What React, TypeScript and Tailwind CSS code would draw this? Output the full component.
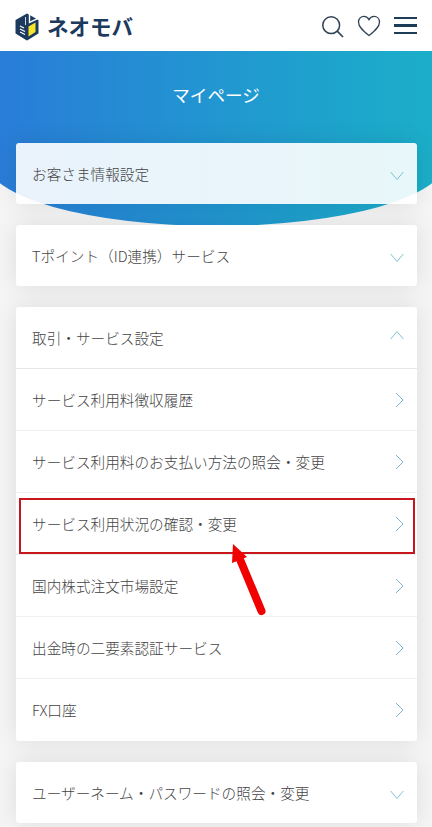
const ChevronDown = () => (
  <svg width="14" height="10" viewBox="0 0 14 10" fill="none" className="mt-[5px] mr-[13px]">
    <path d="M0.7 1 L7 8.5 L13.3 1" stroke="#7fc3d4" strokeWidth="1" />
  </svg>
);

const ChevronUp = () => (
  <svg width="14" height="10" viewBox="0 0 14 10" fill="none" className="-mt-[5px] mr-[13px]">
    <path d="M0.7 9 L7 1.5 L13.3 9" stroke="#7fc3d4" strokeWidth="1" />
  </svg>
);

const ChevronRight = () => (
  <svg width="9" height="16" viewBox="0 0 9 16" fill="none" className="mr-[13px]">
    <path d="M1 1 L8 8 L1 15" stroke="#7fb4d4" strokeWidth="1" />
  </svg>
);

const Logo = () => (
  <svg width="24" height="28" viewBox="0 0 24 28" fill="none" className="mt-[3px]">
    <path d="M12 1.5 L22.5 7.5 V20 L12 26.5 L1.5 20 V7.5 Z" fill="#1c3a5e" stroke="#1c3a5e" strokeWidth="2" strokeLinejoin="round" />
    <path d="M14.5 0 V9.5 L24 5" stroke="#ffffff" strokeWidth="1.4" fill="none" />
    <path d="M13.5 13.5 L20.5 9.5 V19 L13.5 23.5 Z" fill="#f6e32a" />
    <path d="M5 13 L9 15 M5 16 L10 18.5 M5 19 L10 21.5" stroke="#ffffff" strokeWidth="1.2" />
    <path d="M10.5 4 V12" stroke="#ffffff" strokeWidth="0.8" />
  </svg>
);

const Collapsed = ({ label, translucent }: { label: string; translucent?: boolean }) => (
  <div
    className={`relative flex h-[61px] items-center justify-between rounded-[3px] pl-4 shadow-[0_0_24px_rgba(0,0,0,0.1)] ${
      translucent ? "bg-white/90" : "bg-white"
    }`}
  >
    <span>{label}</span>
    <ChevronDown />
  </div>
);

const rows = [
  "サービス利用料徴収履歴",
  "サービス利用料のお支払い方法の照会・変更",
  "サービス利用状況の確認・変更",
  "国内株式注文市場設定",
  "出金時の二要素認証サービス",
  "FX口座",
];

export default function App() {
  return (
    <div
      className="relative h-[827px] w-[432px] overflow-hidden bg-[#f5f5f5] text-[14.65px] font-light text-[#444444]"
      style={{ fontFamily: '"Noto Sans CJK JP", "Noto Sans", sans-serif' }}
    >
      <header className="flex h-[51px] items-center justify-between bg-white pl-[15px] pr-[15px]">
        <div className="flex items-center gap-[8px]">
          <Logo />
          <span className="text-[21.5px] leading-none font-bold text-[#1c3a5e]">ネオモバ</span>
        </div>
        <div className="flex items-center">
          <svg width="22" height="22" viewBox="0 0 22 22" fill="none" className="mt-[2px] mr-[13px]">
            <circle cx="9.2" cy="9.2" r="8.4" stroke="#2f4258" strokeWidth="1.5" />
            <path d="M15.2 15.2 L21 21" stroke="#2f4258" strokeWidth="1.7" />
          </svg>
          <svg width="24" height="22" viewBox="0 0 24 22" fill="none" className="mr-[13px]">
            <path
              d="M12 20.5 C7 16.5 1.5 12.5 1.5 7 C1.5 3.5 4 1.3 7 1.3 C9.2 1.3 11 2.6 12 4.6 C13 2.6 14.8 1.3 17 1.3 C20 1.3 22.5 3.5 22.5 7 C22.5 12.5 17 16.5 12 20.5 Z"
              stroke="#2f4258"
              strokeWidth="1.3"
            />
          </svg>
          <div className="flex w-[23px] flex-col gap-[5px]">
            <div className="h-[2.5px] bg-[#1d3c58]" />
            <div className="h-[2.5px] bg-[#1d3c58]" />
            <div className="h-[2.5px] bg-[#1d3c58]" />
          </div>
        </div>
      </header>

      <div className="-mb-[83px] h-[175px] overflow-hidden">
        <div className="-ml-[14px] flex h-full w-[460px] justify-center rounded-b-[230px_65px] bg-gradient-to-r from-[#2a7bd8] to-[#1bb0c8] pt-[32px]">
          <h1 className="text-[17.6px] leading-[24px] font-normal text-white">マイページ</h1>
        </div>
      </div>

      <div className="relative flex flex-col gap-[21px] pr-[15px] pl-4">
        <Collapsed label="お客さま情報設定" translucent />
        <Collapsed label="Tポイント（ID連携）サービス" />
        <div className="rounded-[3px] bg-white shadow-[0_0_24px_rgba(0,0,0,0.1)]">
          <div className="flex h-[62px] items-center justify-between border-b border-[#e6e6e6] pl-4">
            <span>取引・サービス設定</span>
            <ChevronUp />
          </div>
          {rows.map((row, i) => (
            <div
              key={row}
              className={`flex h-[62px] items-center justify-between pl-4 ${
                i === rows.length - 1 ? "" : "border-b border-[#f0f0f0]"
              }`}
            >
              <span>{row}</span>
              <ChevronRight />
            </div>
          ))}
        </div>
        <Collapsed label="ユーザーネーム・パスワードの照会・変更" />
      </div>

      <div className="absolute top-[498px] left-[19px] h-[56px] w-[396px] border-2 border-[#c8161d]" />
      <svg className="absolute top-[540px] left-[225px]" width="45" height="82" viewBox="0 0 45 82" fill="none">
        <path d="M36.5 71 L14 17" stroke="#f00000" strokeWidth="8" strokeLinecap="round" />
        <path d="M8 4 L7 23 L22 17 Z" fill="#f00000" />
      </svg>
    </div>
  );
}
